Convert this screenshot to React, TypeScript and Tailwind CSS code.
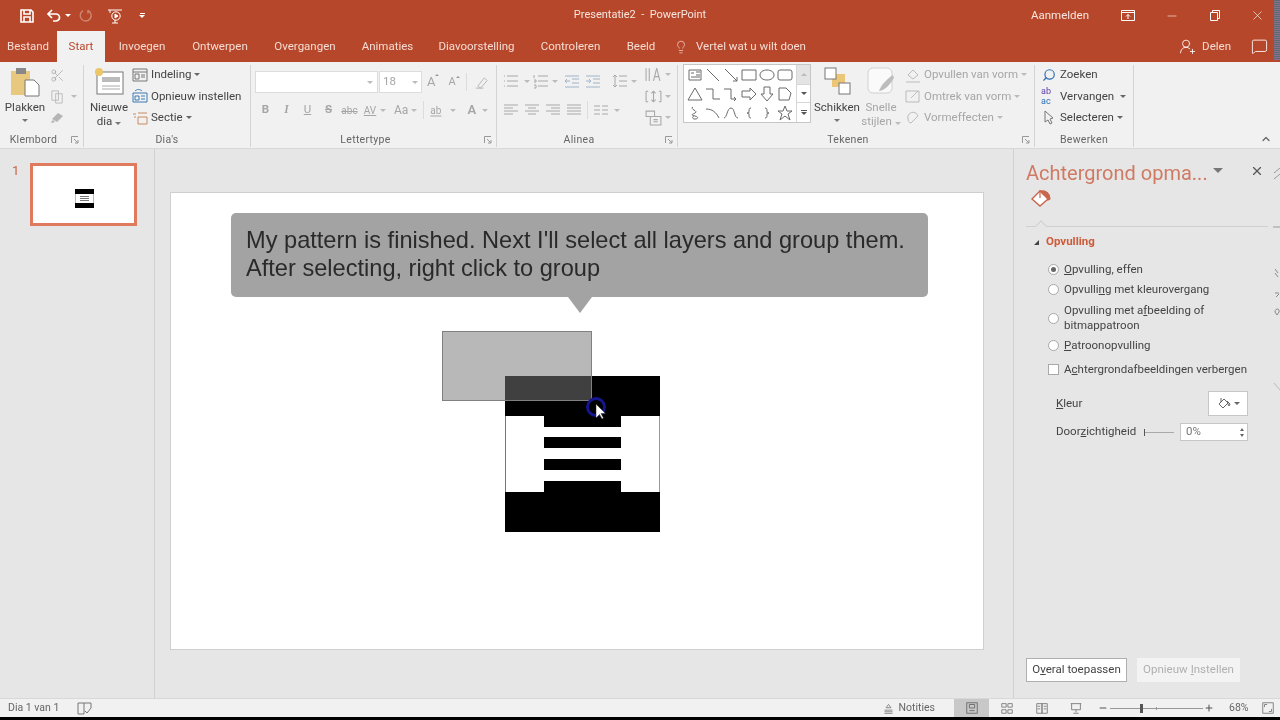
import React from 'react';
import { ChevronUp, Lightbulb, MessageSquare, Minus, Plus, Scissors, Search, UserRoundPlus, X } from 'lucide-react';

const tabs: [string, string][] = [
  ['Invoegen', 'w-[74px]'],
  ['Ontwerpen', 'w-[82px]'],
  ['Overgangen', 'w-[88px]'],
  ['Animaties', 'w-[77px]'],
  ['Diavoorstelling', 'w-[101px]'],
  ['Controleren', 'w-[87px]'],
  ['Beeld', 'w-[54px]'],
];

const shapes = [
  'M2 3h12v10H2z M4 6h3 M9 5h4 M9 8h4 M4 10h9',
  'M2 2l12 12',
  'M2 2l12 12M14 10v4h-4',
  'M1 3h14v10H1z',
  'M8 3c4 0 7 2 7 5s-3 5-7 5-7-2-7-5 3-5 7-5z',
  'M3 3h10a2 2 0 0 1 2 2v6a2 2 0 0 1-2 2H3a2 2 0 0 1-2-2V5a2 2 0 0 1 2-2z',
  'M8 2l7 12H1z',
  'M1 3h7v10h7',
  'M1 3h7v10h5M11 11l2 2-2 2',
  'M1 5h8V2l6 6-6 6v-3H1z',
  'M5 1h6v7h3l-6 7-6-7h3z',
  'M2 2h7l5 5-2 7H2z',
  'M6 2C2 4 12 6 8 8s-4 2 0 3 3 3 0 3-3-2-1-3',
  'M1 4c6 0 10 3 13 9',
  'M1 13c3 0 3-10 7-10s3 10 7 10',
  'M10 3C8 3 8 4 8 6s0 2-2 2c2 0 2 0 2 2s0 3 2 3',
  'M6 3c2 0 2 1 2 3s0 2 2 2c-2 0-2 0-2 2s0 3-2 3',
  'M8 1l2 5h5l-4 3 2 6-5-4-5 4 2-6-4-3h5z',
];

function Caret({ className = 'border-t-[#777]' }: { className?: string }) {
  return <span className={`inline-block w-0 h-0 border-x-[3px] border-x-transparent border-t-[3px] ${className}`} />;
}

function Launcher() {
  return (
    <svg width="8" height="8" viewBox="0 0 8 8" fill="none" stroke="#999" strokeWidth="1">
      <path d="M0.5 7V0.5H7M3 3l4 4M7 4v3H4" />
    </svg>
  );
}

function Line({ d, size = 16, stroke = '#a8a8a8' }: { d: string; size?: number; stroke?: string }) {
  return (
    <svg width={size} height={size} viewBox="0 0 16 16" fill="none" stroke={stroke} strokeWidth="1">
      <path d={d} />
    </svg>
  );
}

function Group({
  width,
  label,
  launcher,
  children,
}: {
  width: string;
  label: string;
  launcher?: boolean;
  children: React.ReactNode;
}) {
  return (
    <div className={`${width} shrink-0 h-[82px] mt-[3px] border-r border-[#d4d4d4] flex flex-col`}>
      <div className="flex-1 flex min-h-0">{children}</div>
      <div className={`h-[14px] relative text-[10.5px] leading-[14px] tracking-[0.3px] text-center text-[#666] ${launcher ? 'pr-[16px]' : ''}`}>
        {label}
        {launcher && (
          <span className="absolute right-[4px] top-[3px] flex">
            <Launcher />
          </span>
        )}
      </div>
    </div>
  );
}

function SmallRow({ icon, label, caret, muted }: { icon: React.ReactNode; label: string; caret?: boolean; muted?: boolean }) {
  return (
    <div className={`h-[21.5px] flex items-center gap-[3px] whitespace-nowrap ${muted ? 'text-[#a6a6a6]' : 'text-[#444]'}`}>
      <span className="w-[16px] h-[16px] flex items-center justify-center shrink-0">{icon}</span>
      <span>{label}</span>
      {caret && <Caret className={muted ? 'border-t-[#bbb]' : 'border-t-[#666]'} />}
    </div>
  );
}

function GrowFont({ size }: { size: string }) {
  return (
    <span className={`flex items-start text-[#a6a6a6] ${size}`}>
      A
      <span className="mt-[2px] w-0 h-0 border-x-[2px] border-x-transparent border-b-[2px] border-b-[#999]" />
    </span>
  );
}

function Pattern({ scale }: { scale: 'big' | 'small' }) {
  if (scale === 'small') {
    return (
      <div className="w-[19px] h-[19px] bg-black flex flex-col justify-center">
        <div className="h-[9px] flex">
          <div className="w-[5px] bg-white border-l border-[#bbb]" />
          <div className="flex-1 bg-white flex flex-col justify-center gap-[1px]">
            <div className="h-[1px] bg-[#777]" />
            <div className="h-[1px] bg-[#777]" />
            <div className="h-[1px] bg-[#777]" />
          </div>
          <div className="w-[5px] bg-white border-r border-[#bbb]" />
        </div>
      </div>
    );
  }
  return (
    <div className="w-[155px] h-[156px] bg-black flex flex-col justify-between">
      <div className="h-[40px]" />
      <div className="h-[76px] flex">
        <div className="w-[39px] bg-white border-l border-[#777]" />
        <div className="w-[77px] flex flex-col pt-[11px]">
          <div className="h-[10px] bg-white" />
          <div className="h-[11px]" />
          <div className="h-[11px] bg-white" />
          <div className="h-[11px]" />
          <div className="h-[11px] bg-white" />
        </div>
        <div className="w-[39px] bg-white border-r border-[#999]" />
      </div>
      <div className="h-[40px]" />
    </div>
  );
}

function Radio({ label, checked, className = '' }: { label: React.ReactNode; checked?: boolean; className?: string }) {
  return (
    <div className={`flex items-center ${className}`}>
      <span className="w-[11px] h-[11px] rounded-full border border-[#a8a8a8] bg-white flex items-center justify-center shrink-0 ml-[34px]">
        {checked && <span className="w-[5px] h-[5px] rounded-full bg-[#666]" />}
      </span>
      <span className="ml-[5px] leading-[15px]">{label}</span>
    </div>
  );
}

export default function App() {
  return (
    <div className="relative w-[1280px] h-[720px] overflow-hidden bg-black blur-[0.3px] text-[11.5px] text-[#444] font-['Roboto','Noto_Sans',sans-serif]">
      {/* title bar */}
      <div className="h-[31px] bg-[#b7472a] text-[#f6e6e0] grid grid-cols-[1fr_auto_1fr] items-center">
        <div className="flex items-center pl-[19px]">
          <svg width="16" height="16" viewBox="0 0 16 16" fill="none" stroke="#fff" strokeWidth="1.6">
            <path d="M2 2h10l2 2v10H2z M5 2v4h6V2 M5 14V9h6v5" />
          </svg>
          <svg className="ml-[11px]" width="16" height="14" viewBox="0 0 16 14" fill="none" stroke="#fff" strokeWidth="1.7">
            <path d="M6 1L2 5l4 4M2 5h8a3.5 3.5 0 0 1 0 7H7" />
          </svg>
          <span className="ml-[3px] flex">
            <Caret className="border-t-white" />
          </span>
          <svg className="ml-[8px]" width="14" height="14" viewBox="0 0 14 14" fill="none" stroke="#cf8672" strokeWidth="1.4">
            <path d="M9 1.500a5.500 5.500 0 1 1-5 .2M9 1v3.500" />
          </svg>
          <svg className="ml-[14px]" width="16" height="16" viewBox="0 0 16 16" fill="none" stroke="#fff" strokeWidth="1">
            <path d="M1 2h14M3 2v3M8 12v3M5 15h6" />
            <circle cx="9" cy="8" r="4.2" />
            <path d="M8 6l3 2-3 2z" fill="#fff" />
          </svg>
          <span className="ml-[16px] flex flex-col items-center gap-[1px]">
            <span className="w-[5px] h-[1px] bg-white" />
            <Caret className="border-t-white" />
          </span>
        </div>
        <div className="text-[11px] whitespace-pre">Presentatie2  -  PowerPoint</div>
        <div className="flex items-center justify-end">
          <span className="text-[11.5px] mr-[32px]">Aanmelden</span>
          <svg className="mr-[30px]" width="14" height="12" viewBox="0 0 14 12" fill="none" stroke="#fff">
            <path d="M.5.500h13v10H.5zM.5 2.500h13M7 9V4.500M5 6.500l2-2 2 2" />
          </svg>
          <Minus size={14} strokeWidth={1} className="mr-[31px] text-white" />
          <svg className="mr-[30px]" width="10" height="11" viewBox="0 0 10 11" fill="none" stroke="#fff">
            <path d="M.5 2.500h7v8h-7zM2.500 2.500v-2h7v8h-2" />
          </svg>
          <X size={15} strokeWidth={1} className="mr-[15px] text-white" />
        </div>
      </div>

      {/* tabs */}
      <div className="h-[31px] bg-[#b7472a] flex items-end text-[11.5px] text-[#f4dcd4]">
        <div className="w-[57px] h-full pl-[7px] flex items-center">Bestand</div>
        <div className="w-[48px] h-full bg-[#f1f1f1] text-[#b7472a] flex items-center justify-center">Start</div>
        {tabs.map(([name, width]) => (
          <div key={name} className={`${width} h-full flex items-center justify-center`}>
            {name}
          </div>
        ))}
        <div className="h-full ml-[6px] flex items-center gap-[8px]">
          <Lightbulb size={14} strokeWidth={1.2} />
          <span>Vertel wat u wilt doen</span>
        </div>
        <div className="flex-1 h-full flex items-center justify-end">
          <UserRoundPlus size={17} strokeWidth={1.2} className="text-white mr-[6px]" />
          <span className="mr-[20px]">Delen</span>
          <MessageSquare size={17} strokeWidth={1.2} className="text-white mr-[12px]" />
        </div>
      </div>

      {/* ribbon */}
      <div className="h-[86px] bg-[#f1f1f1] border-b border-[#d8d8d8] flex box-content">
        <Group width="w-[84px]" label="Klembord" launcher>
          <div className="w-[50px] flex flex-col items-center pt-[2px]">
            <svg width="30" height="30" viewBox="0 0 30 30">
              <rect x="1" y="4" width="19" height="24" fill="#e8c77e" />
              <rect x="6" y="1" width="10" height="6" fill="#888" />
              <path d="M15 13h9l5 5v11H15z" fill="#fff" stroke="#777" />
            </svg>
            <span className="mt-[3px] leading-[14px]">Plakken</span>
            <span className="mt-[5px] flex">
              <Caret />
            </span>
          </div>
          <div className="flex flex-col items-start -mt-[1px]">
            <span className="h-[22px] flex items-center">
              <Scissors size={15} strokeWidth={1} className="text-[#999]" />
            </span>
            <span className="h-[21px] flex items-center gap-[6px]">
              <Line d="M2 2h7v10H2zM6 5h7v10H6z" size={15} stroke="#bbb" />
              <Caret className="border-t-[#bbb]" />
            </span>
            <span className="h-[21px] flex items-center">
              <svg width="15" height="15" viewBox="0 0 15 15" fill="#b5b5b5">
                <path d="M2 9l6-6 5 3-6 6zM1 12l2-2 2 2-3 1z" />
              </svg>
            </span>
          </div>
        </Group>

        <Group width="w-[167px]" label="Dia's">
          <div className="w-[48px] ml-[1px] flex flex-col items-center pt-[2px]">
            <svg width="30" height="30" viewBox="0 0 30 30" fill="none">
              <rect x="3" y="5" width="26" height="22" fill="#fff" stroke="#777" />
              <rect x="8" y="10" width="18" height="5" fill="#bbb" />
              <path d="M8 19h18M8 22h18" stroke="#aaa" />
              <circle cx="5" cy="5" r="4" fill="#ebc66a" />
            </svg>
            <span className="mt-[3px] leading-[14px] text-center">
              Nieuwe
              <br />
              dia <Caret />
            </span>
          </div>
          <div className="-ml-[1px] flex flex-col -mt-[1px]">
            <SmallRow icon={<Line d="M1 2h14v12H1zM1 5h14M3 7h4v5H3zM9 8h4M9 10h4" stroke="#777" />} label="Indeling" caret />
            <SmallRow icon={<Line d="M1 5h14v9H1zM3 8h4v4H3zM9 8h4M9 11h4M3 3c2-2 5-2 7 0" stroke="#3b79b5" />} label="Opnieuw instellen" />
            <SmallRow icon={<Line d="M6 3h9M6 7h9v7H6zM1 4h3M2 7h2" stroke="#c98a5e" />} label="Sectie" caret />
          </div>
        </Group>

        <Group width="w-[246px]" label="Lettertype" launcher>
          <div className="flex flex-col pl-[4px] pt-[6px]">
            <div className="flex items-center h-[22px]">
              <div className="w-[123px] h-[22px] bg-white border border-[#dcdcdc] flex items-center justify-end pr-[4px]">
                <Caret className="border-t-[#bbb]" />
              </div>
              <div className="w-[43px] h-[22px] ml-[1px] bg-white border border-[#dcdcdc] flex items-center justify-between px-[3px] text-[#a6a6a6]">
                18
                <Caret className="border-t-[#bbb]" />
              </div>
              <span className="ml-[5px]">
                <GrowFont size="text-[13px]" />
              </span>
              <span className="ml-[9px]">
                <GrowFont size="text-[11px]" />
              </span>
              <span className="ml-[6px] w-[1px] h-[18px] bg-[#dcdcdc]" />
              <span className="ml-[7px] flex">
                <Line d="M4 12l7-9 3 3-7 8zM2 14h8" size={15} stroke="#b5b5b5" />
              </span>
            </div>
            <div className="flex items-center mt-[7px] h-[20px] text-[#a6a6a6]">
              <span className="w-[21px] text-center font-bold">B</span>
              <span className="w-[21px] text-center italic font-['Liberation_Serif',serif] font-bold">I</span>
              <span className="w-[21px] text-center underline">U</span>
              <span className="w-[21px] text-center font-bold line-through">S</span>
              <span className="w-[21px] text-center text-[10px] line-through">abc</span>
              <span className="w-[20px] text-center text-[10px] underline">AV</span>
              <Caret className="border-t-[#bbb]" />
              <span className="ml-[8px] text-[12px]">Aa</span>
              <span className="ml-[3px] flex">
                <Caret className="border-t-[#bbb]" />
              </span>
              <span className="ml-[6px] w-[1px] h-[18px] bg-[#dcdcdc]" />
              <span className="ml-[6px] text-[10px] underline decoration-[#ccc] decoration-2">ab</span>
              <span className="ml-[9px] flex">
                <Caret className="border-t-[#bbb]" />
              </span>
              <span className="ml-[11px] text-[13px] font-semibold">A</span>
              <span className="ml-[6px] flex">
                <Caret className="border-t-[#bbb]" />
              </span>
            </div>
          </div>
        </Group>

        <Group width="w-[181px]" label="Alinea" launcher>
          <div className="w-[148px] flex flex-col pl-[6px] pt-[6px] text-[#b5b5b5]">
            <div className="flex items-center h-[20px]">
              <Line d="M4 3h11M4 8h11M4 13h11M1 3h1M1 8h1M1 13h1" />
              <span className="ml-[5px] flex">
                <Caret className="border-t-[#bbb]" />
              </span>
              <span className="ml-[3px] flex">
                <Line d="M5 3h10M5 8h10M5 13h10M1 2v3M1 7h2v2H1M1 12h2v3H1" />
              </span>
              <span className="ml-[3px] flex">
                <Caret className="border-t-[#bbb]" />
              </span>
              <span className="ml-[6px] flex">
                <Line d="M1 3h14M8 6h7M8 10h7M1 14h14M6 8H1M3 6L1 8l2 2" stroke="#9fb4c8" />
              </span>
              <span className="ml-[5px] flex">
                <Line d="M1 3h14M8 6h7M8 10h7M1 14h14M1 8h5M4 6l2 2-2 2" stroke="#9fb4c8" />
              </span>
              <span className="ml-[11px] flex">
                <Line d="M7 3h8M7 8h8M7 13h8M3 2v12M1 4l2-2 2 2M1 12l2 2 2-2" />
              </span>
              <span className="ml-[3px] flex">
                <Caret className="border-t-[#bbb]" />
              </span>
            </div>
            <div className="flex items-center gap-[5px] mt-[9px] h-[20px]">
              <Line d="M1 3h14M1 6h9M1 9h14M1 12h9" />
              <Line d="M1 3h14M4 6h8M1 9h14M4 12h8" />
              <Line d="M1 3h14M6 6h9M1 9h14M6 12h9" />
              <Line d="M1 3h14M1 6h14M1 9h14M1 12h14" />
              <span className="w-[1px] h-[18px] bg-[#dcdcdc]" />
              <span className="flex">
                <Line d="M1 4h6M1 8h6M1 12h6M9 4h6M9 8h6M9 12h6" />
              </span>
              <Caret className="border-t-[#bbb]" />
            </div>
          </div>
          <div className="flex flex-col gap-[4.5px] mt-[1px]">
            <span className="flex items-center gap-[3px]">
              <Line d="M1 2v12M4 2v12M8 14l3-12 3 12M9 10h4" size={17} />
              <Caret className="border-t-[#bbb]" />
            </span>
            <span className="flex items-center gap-[3px]">
              <Line d="M1 3h2M13 3h2M1 13h2M13 13h2M1 3v10M15 3v10M8 3v10M6 5l2-2 2 2M6 11l2 2 2-2" size={17} />
              <Caret className="border-t-[#bbb]" />
            </span>
            <span className="flex items-center gap-[3px]">
              <Line d="M1 2h8v5H1zM5 7h10v8H5zM8 10h4M8 12h4" size={17} />
              <Caret className="border-t-[#bbb]" />
            </span>
          </div>
        </Group>

        <Group width="w-[357px]" label="Tekenen" launcher>
          <div className="ml-[5px] -mt-[1px] w-[128px] h-[59px] bg-white border border-[#c6c6c6] flex">
            <div className="flex-1 grid grid-cols-6 px-[2px] items-center justify-items-center">
              {shapes.map((d, i) => (
                <Line key={i} d={d} size={16} stroke="#6a6a6a" />
              ))}
            </div>
            <div className="w-[14px] border-l border-[#d6d6d6] flex flex-col items-center">
              <div className="h-[19px] w-full bg-[#e4e4e4] flex items-center justify-center">
                <span className="w-0 h-0 border-x-[3px] border-x-transparent border-b-[3px] border-b-[#bbb]" />
              </div>
              <div className="h-[19px] w-full border-y border-[#d6d6d6] flex items-center justify-center">
                <Caret className="border-t-[#555]" />
              </div>
              <div className="flex-1 flex flex-col items-center justify-center gap-[1px]">
                <span className="w-[6px] h-[1px] bg-[#555]" />
                <Caret className="border-t-[#555]" />
              </div>
            </div>
          </div>
          <div className="w-[50px] ml-[1px] flex flex-col items-center pt-[2px]">
            <svg width="27" height="28" viewBox="0 0 27 28">
              <rect x="8" y="7" width="13" height="13" fill="#ebc676" />
              <rect x="1" y="1" width="11" height="11" fill="#fff" stroke="#777" />
              <rect x="15" y="16" width="11" height="11" fill="#fff" stroke="#777" />
            </svg>
            <span className="mt-[5px] leading-[14px]">Schikken</span>
            <span className="mt-[5px] flex">
              <Caret />
            </span>
          </div>
          <div className="w-[38px] flex flex-col items-center pt-[2px] text-[#a6a6a6]">
            <svg width="28" height="28" viewBox="0 0 28 28" fill="none">
              <rect x="1" y="1" width="24" height="25" rx="5" fill="#fafafa" stroke="#d0d0d0" />
              <path d="M12 24c2-6 8-12 14-16l1 3c-4 6-8 12-15 13z" fill="#bdbdbd" />
            </svg>
            <span className="mt-[5px] leading-[14px] text-center whitespace-nowrap">
              Snelle
              <br />
              stijlen <Caret className="border-t-[#bbb]" />
            </span>
          </div>
          <div className="flex flex-col ml-[5px] -mt-[1px]">
            <SmallRow muted icon={<Line d="M3 8l5-5 5 5-5 4zM1 15h14" stroke="#bbb" />} label="Opvullen van vorm" caret />
            <SmallRow muted icon={<Line d="M1 3h13v11H1zM6 10l7-7" stroke="#bbb" />} label="Omtrek van vorm" caret />
            <SmallRow muted icon={<Line d="M3 9a5 5 0 0 1 10-3L6 13c-2 0-3-2-3-4z" stroke="#bbb" />} label="Vormeffecten" caret />
          </div>
        </Group>

        <Group width="w-[99px]" label="Bewerken">
          <div className="flex flex-col pl-[6px] -mt-[1px]">
            <SmallRow icon={<Search size={14} strokeWidth={2} className="text-[#2a6fb5] -scale-x-100" />} label="Zoeken" />
            <div className="h-[21.5px] flex items-center gap-[3px] whitespace-nowrap">
              <span className="w-[16px] flex flex-col text-[9px] leading-[10px] text-[#5a3ea8]">
                <span>ab</span>
                <span className="text-[#2a6fb5]">ac</span>
              </span>
              <span>Vervangen</span>
              <span className="ml-[3px] flex">
                <Caret className="border-t-[#666]" />
              </span>
            </div>
            <SmallRow icon={<Line d="M4 1v11l3-2 2 4 2-1-2-4 3-1z" stroke="#777" />} label="Selecteren" caret />
          </div>
        </Group>

        <div className="flex-1 flex items-end justify-end pr-[8px] pb-[3px]">
          <ChevronUp size={12} strokeWidth={2.5} className="text-[#666]" />
        </div>
      </div>

      {/* main */}
      <div className="h-[549px] bg-[#e6e6e6] flex">
        <div className="w-[155px] shrink-0 border-r border-[#d0d0d0] pt-[14px] flex items-start">
          <span className="w-[30px] pl-[12px] text-[13px] leading-[16px] text-[#c9664c]">1</span>
          <div className="w-[107px] h-[63px] bg-white border-[3px] border-[#e07a5f] flex justify-center pt-[23px] pl-[1px]">
            <Pattern scale="small" />
          </div>
        </div>

        <div className="w-[858px] shrink-0 pl-[15px] pt-[43px]">
          <div className="relative w-[814px] h-[458px] bg-white border border-[#cfcfcf]">
            <div className="absolute left-[60px] top-[20px] w-[697px] h-[84px] rounded-[5px] bg-[#a3a3a3] pl-[15px] pt-[14px] text-[23.6px] leading-[27.5px] text-[#2a2a2a] whitespace-nowrap font-['Liberation_Sans',Arial,sans-serif]">
              My pattern is finished. Next I'll select all layers and group them.
              <br />
              After selecting, right click to group
            </div>
            <div className="absolute left-[397px] top-[104px] w-0 h-0 border-x-[12px] border-x-transparent border-t-[16px] border-t-[#a3a3a3]" />
            <div className="absolute left-[334px] top-[183px]">
              <Pattern scale="big" />
            </div>
            <div className="absolute left-[271px] top-[138px] w-[150px] h-[70px] border border-[#808080] bg-[rgba(121,121,121,0.53)]" />
            <svg className="absolute left-[414px] top-[203px]" width="24" height="28" viewBox="0 0 24 28">
              <circle cx="11" cy="11" r="8.500" fill="none" stroke="#15158f" strokeWidth="3" />
              <path d="M11 8v14l3.500-3.500 2.500 4.500 1.500-1-2.500-4.500h4.500z" fill="#fff" stroke="#222" strokeWidth="0.5" />
            </svg>
          </div>
        </div>

        <div className="flex-1 border-l border-[#d0d0d0] flex flex-col relative">
          <div className="flex items-center h-[44px] pl-[12px] pt-[4px]">
            <span className="text-[20px] text-[#cf7a63] w-[178px] whitespace-nowrap">Achtergrond opma...</span>
            <span className="mb-[5px] ml-[9px] flex">
              <span className="w-0 h-0 border-x-[5px] border-x-transparent border-t-[5px] border-t-[#777]" />
            </span>
            <X size={14} strokeWidth={2} className="text-[#555] ml-[27px] mb-[5px]" />
          </div>
          <div className="pl-[15px] h-[21px] -mt-[4px]">
            <svg width="24" height="20" viewBox="0 0 24 20" fill="none">
              <path d="M11 2l8 8-8 7-8-7z" fill="#fff" stroke="#c9664c" strokeWidth="1.4" />
              <path d="M11 1v8M12 2c5-1 9 3 9 8l-2 1c0-3-3-5-5-6z" stroke="#c9664c" strokeWidth="1.2" fill="#c9664c" />
            </svg>
          </div>
          <div className="mx-[12px] mt-[16px] h-[1px] bg-[#cfcfcf] relative">
            <span className="absolute left-[11px] -top-[4px] w-[8px] h-[8px] rotate-45 border-l border-t border-[#cfcfcf] bg-[#e6e6e6]" />
          </div>
          <div className="flex items-center pl-[20px] mt-[8px] h-[14px]">
            <span className="w-0 h-0 border-l-[5px] border-l-transparent border-b-[5px] border-b-[#444]" />
            <span className="ml-[7px] font-bold text-[#cf5a38]">Opvulling</span>
          </div>
          <Radio className="mt-[13px] h-[15px]" checked label={<><u>O</u>pvulling, effen</>} />
          <Radio className="mt-[5px] h-[15px]" label={<>Opvulli<u>n</u>g met kleurovergang</>} />
          <Radio className="mt-[6px] h-[30px]" label={<>Opvulling met a<u>f</u>beelding of<br />bitmappatroon</>} />
          <Radio className="mt-[5px] h-[15px]" label={<><u>P</u>atroonopvulling</>} />
          <div className="flex items-center mt-[9px] h-[15px]">
            <span className="w-[11px] h-[11px] border border-[#a8a8a8] bg-white ml-[34px]" />
            <span className="ml-[5px]">
              A<u>c</u>htergrondafbeeldingen verbergen
            </span>
          </div>
          <div className="flex items-center justify-between mt-[14px] pl-[42px] pr-[32px] h-[25px]">
            <span>
              <u>K</u>leur
            </span>
            <div className="w-[40px] h-[25px] bg-white border border-[#c6c6c6] flex items-center justify-center gap-[3px]">
              <svg width="14" height="13" viewBox="0 0 14 13" fill="none" stroke="#666">
                <path d="M2 7l5-5 4 4-5 5zM4 1v4M10 4l3 3-1 2-1-2z" />
              </svg>
              <Caret className="border-t-[#666]" />
            </div>
          </div>
          <div className="flex items-center mt-[7px] pl-[42px] h-[18px]">
            <span className="w-[88px] whitespace-nowrap">
              Door<u>z</u>ichtigheid
            </span>
            <span className="w-[30px] h-[1px] bg-[#aaa] relative">
              <span className="absolute left-0 -top-[3px] w-[1px] h-[7px] bg-[#555]" />
            </span>
            <div className="ml-[6px] w-[68px] h-[18px] bg-white border border-[#c6c6c6] flex items-center justify-between pl-[5px] pr-[3px] text-[#777]">
              0%
              <span className="flex flex-col gap-[3px]">
                <span className="w-0 h-0 border-x-[2px] border-x-transparent border-b-[3px] border-b-[#666]" />
                <span className="w-0 h-0 border-x-[2px] border-x-transparent border-t-[3px] border-t-[#666]" />
              </span>
            </div>
          </div>
          <div className="flex-1 flex items-end gap-[10px] pl-[12px] pb-[16px]">
            <div className="w-[101px] h-[24px] bg-white border border-[#b0b0b0] flex items-center justify-center whitespace-nowrap">
              O<u>v</u>eral toepassen
            </div>
            <div className="w-[103px] h-[24px] bg-[#f3f3f3] flex items-center justify-center whitespace-nowrap text-[#b0b0b0]">
              Opnieuw <u className="ml-[3px]">I</u>nstellen
            </div>
          </div>
        </div>
      </div>

      {/* status bar */}
      <div className="h-[18px] bg-[#f1f1f1] border-t border-[#d8d8d8] box-content flex items-center text-[10.5px] text-[#666]">
        <span className="pl-[8px] w-[77px]">Dia 1 van 1</span>
        <Line d="M1 3h6v11H1zM7 3h7v5M8 11l2 2 4-5" stroke="#777" />
        <div className="flex-1 flex items-center justify-end h-full">
          <span className="flex items-center gap-[4px] mr-[19px]">
            <Line d="M3 10h10M3 12h10M3 14h10M5 7l3-4 3 4z" size={13} stroke="#777" />
            Notities
          </span>
          <span className="w-[35px] h-full bg-[#c8c8c8] flex items-center justify-center">
            <Line d="M2 2h12v12H2zM5 4h6v4H5zM5 11h6" size={14} stroke="#666" />
          </span>
          <span className="w-[35px] flex justify-center">
            <Line d="M2 3h5v4H2zM9 3h5v4H9zM2 10h5v4H2zM9 10h5v4H9z" size={14} stroke="#777" />
          </span>
          <span className="w-[35px] flex justify-center">
            <Line d="M2 3h6v11H2zM8 3h6v11H8zM3 6h3M3 9h3M10 6h3M10 9h3" size={14} stroke="#777" />
          </span>
          <span className="w-[33px] flex justify-center">
            <Line d="M2 3h12M3 3v7h10V3M8 10v3M5 14h6" size={14} stroke="#777" />
          </span>
          <Minus size={10} strokeWidth={2.5} className="ml-[6px] text-[#555]" />
          <span className="ml-[2px] w-[93px] h-[1px] bg-[#999] relative">
            <span className="absolute left-[30px] -top-[4px] w-[3px] h-[9px] bg-[#555]" />
            <span className="absolute left-[46px] -top-[1px] w-[1px] h-[3px] bg-[#999]" />
          </span>
          <Plus size={10} strokeWidth={2.5} className="ml-[1px] text-[#555]" />
          <span className="ml-[15px] w-[32px]">68%</span>
          <span className="mr-[5px] flex">
            <Line d="M2 2h12v12H2zM4 7V4h3M12 9v3H9" size={14} stroke="#777" />
          </span>
        </div>
      </div>

      {/* capture leftovers along the right edge */}
      <div className="absolute right-0 top-0 w-[6px] h-[60px] bg-[repeating-linear-gradient(180deg,#5b6b6e_0px,#5b6b6e_1px,#8a6f8f_1px,#8a6f8f_2px)]" />
      <svg className="absolute right-0 top-[165px]" width="7" height="285" viewBox="0 0 7 285" fill="none" stroke="#999">
        <path d="M1 8l6-5M1 14l6-5M0 62h7" />
        <path d="M2 104l3 4M2 108l3 4M2 128h4M3 132l3-3M2 147c0-4 5-4 4 0l-2 3z" stroke="#888" />
        <path d="M1 218l6 7" stroke="#bbb" />
      </svg>
    </div>
  );
}
